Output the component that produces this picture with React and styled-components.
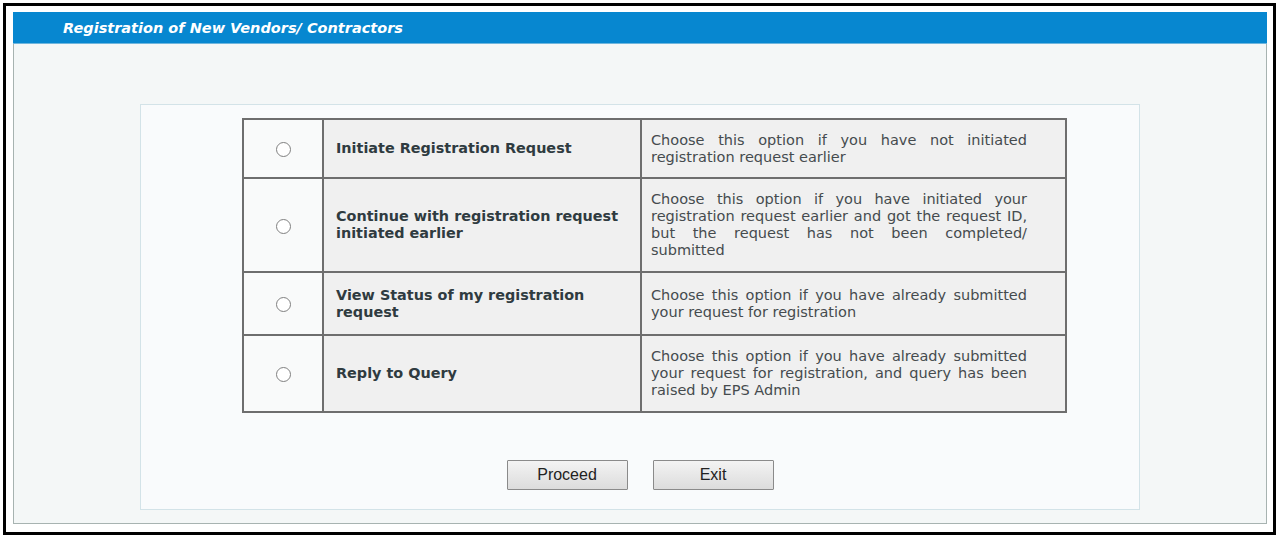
import React from "react";
import styled, { createGlobalStyle } from "styled-components";

const GlobalStyle = createGlobalStyle`
  html, body {
    margin: 0;
    padding: 0;
    background: #ffffff;
  }
  body {
    font-family: "DejaVu Sans", Verdana, sans-serif;
  }
`;

const Frame = styled.div({
  margin: 3,
  height: 532,
  boxSizing: "border-box",
  border: "3px solid #000",
  padding: "6px 6px 7px 7px",
});

const Panel = styled.div({
  height: 512,
  boxSizing: "border-box",
  border: "1px solid #a7b3b1",
  borderTop: "none",
  backgroundColor: "#f4f7f7",
  display: "flex",
  flexDirection: "column",
});

const Header = styled.div({
  height: 31,
  margin: "0 -1px",
  backgroundColor: "#0787d0",
  color: "#ffffff",
  fontFamily: '"DejaVu Sans", Verdana, sans-serif',
  fontWeight: "bold",
  fontStyle: "italic",
  fontSize: 14.5,
  display: "flex",
  alignItems: "center",
  paddingLeft: 50,
  boxShadow: "0 1px 0 #6fb6dd",
});

const Body = styled.div({
  flex: 1,
  padding: "61px 126px 13px 126px",
  display: "flex",
});

const InnerBox = styled.div({
  flex: 1,
  boxSizing: "border-box",
  border: "1px solid #d3e3e8",
  backgroundColor: "#f9fbfc",
  padding: "13px 0 0 101px",
  display: "flex",
  flexDirection: "column",
});

const Table = styled.table({
  width: 825,
  borderCollapse: "collapse",
  border: "2px solid #6e6e6e",
});

const Row = styled.tr(({ $h }) => ({
  height: $h,
}));

const RadioCell = styled.td({
  width: 78,
  border: "2px solid #6e6e6e",
  backgroundColor: "#f9fafa",
  textAlign: "center",
  verticalAlign: "middle",
  padding: 0,
});

const Radio = styled.span({
  display: "inline-block",
  width: 13,
  height: 13,
  borderRadius: "50%",
  border: "1px solid #808080",
  backgroundColor: "#ffffff",
  verticalAlign: "middle",
});

const LabelCell = styled.td({
  width: 290,
  border: "2px solid #6e6e6e",
  backgroundColor: "#f0f0f0",
  padding: "0 14px 0 12px",
  color: "#2f3b40",
  fontWeight: "bold",
  fontSize: 14.4,
  lineHeight: "17px",
  verticalAlign: "middle",
});

const DescCell = styled.td({
  border: "2px solid #6e6e6e",
  backgroundColor: "#f0f0f0",
  padding: "0 38px 0 9px",
  color: "#454b4e",
  fontSize: 14.5,
  lineHeight: "17px",
  textAlign: "justify",
  verticalAlign: "middle",
});

const Buttons = styled.div({
  display: "flex",
  justifyContent: "center",
  gap: 25,
  marginTop: 47,
  marginLeft: -101,
});

const Button = styled.button({
  width: 121,
  height: 30,
  boxSizing: "border-box",
  border: "1px solid #8a8a8a",
  borderRadius: 1,
  background: "linear-gradient(#f3f3f3, #dcdcdc)",
  fontFamily: '"Liberation Sans", Arial, sans-serif',
  fontSize: 16,
  color: "#222222",
  padding: 0,
});

const options = [
  {
    label: "Initiate Registration Request",
    desc: "Choose this option if you have not initiated registration request earlier",
    h: 59,
  },
  {
    label: "Continue with registration request initiated earlier",
    desc: "Choose this option if you have initiated your registration request earlier and got the request ID, but the request has not been completed/ submitted",
    h: 94,
  },
  {
    label: "View Status of my registration request",
    desc: "Choose this option if you have already submitted your request for registration",
    h: 63,
  },
  {
    label: "Reply to Query",
    desc: "Choose this option if you have already submitted your request for registration, and query has been raised by EPS Admin",
    h: 77,
  },
];

export default function App() {
  return (
    <>
      <GlobalStyle />
      <Frame>
        <Panel>
          <Header>Registration of New Vendors/ Contractors</Header>
          <Body>
            <InnerBox>
              <Table>
                <tbody>
                  {options.map((o) => (
                    <Row key={o.label} $h={o.h}>
                      <RadioCell>
                        <Radio />
                      </RadioCell>
                      <LabelCell>{o.label}</LabelCell>
                      <DescCell>{o.desc}</DescCell>
                    </Row>
                  ))}
                </tbody>
              </Table>
              <Buttons>
                <Button>Proceed</Button>
                <Button>Exit</Button>
              </Buttons>
            </InnerBox>
          </Body>
        </Panel>
      </Frame>
    </>
  );
}
